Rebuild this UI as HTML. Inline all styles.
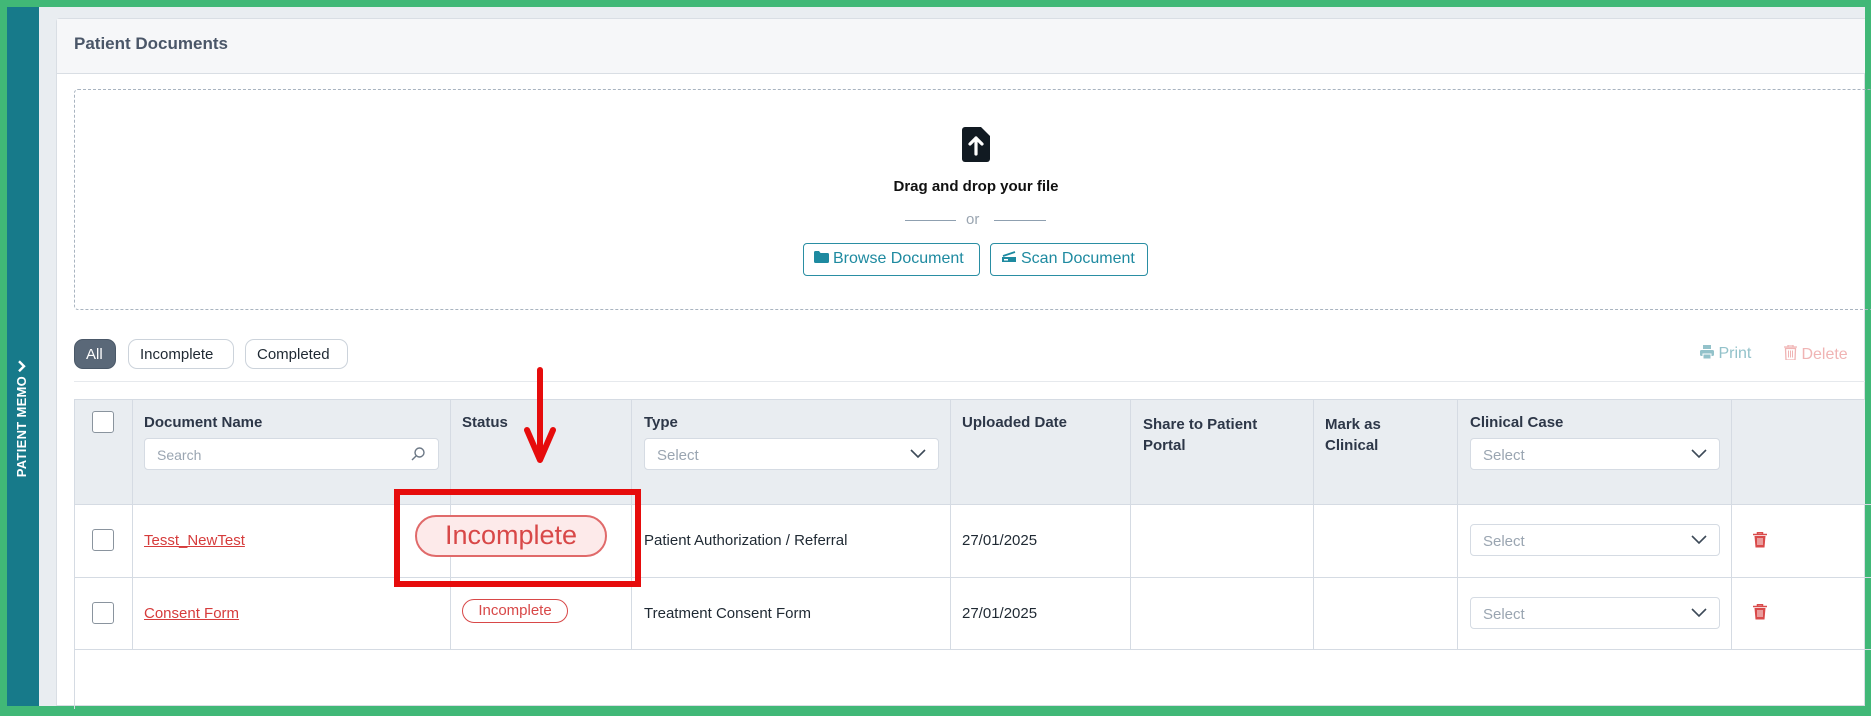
<!DOCTYPE html>
<html><head><meta charset="utf-8"><style>
*{box-sizing:border-box;margin:0;padding:0}
body{width:1871px;height:716px;overflow:hidden;background:#41b877;font-family:"Liberation Sans",sans-serif;position:relative}
.a{position:absolute}
.t{color:#1f2933;font-size:15px}
.h{color:#2d3748;font-size:15px;font-weight:bold}
.sel{position:absolute;background:#fff;border:1px solid #d5dbe3;border-radius:4px;height:32px;color:#9aa5b1;font-size:15px;padding:8px 12px}
.sel svg{position:absolute;right:12px;top:10px}
.cb{position:absolute;width:22px;height:22px;border:1.5px solid #8a949e;border-radius:3px;background:#fff;left:92px}
.vl{position:absolute;width:1px;background:#d5dbe3}
.hl{position:absolute;height:1px;background:#d5dbe3;left:74px;right:0}
.pill{position:absolute;height:30px;border:1px solid #ccd3db;border-radius:9px;font-size:15px;color:#1f2933;padding:6px 11px;background:#fff}
.btn{position:absolute;top:243px;height:33px;border:1.5px solid #2a8ea3;border-radius:4px;color:#1e8aa0;font-size:16px;padding:6px 10px 0 10px}
.trash{position:absolute;left:1753px}
</style></head><body>
<div class="a" style="left:7px;top:7px;width:1858px;height:699px;background:#e9edf1"></div>
<div class="a" style="left:7px;top:7px;width:32px;height:699px;background:#177a8a"></div>
<div class="a" style="left:14px;top:360px;width:20px;color:#fff;font-size:13px;font-weight:bold;writing-mode:vertical-rl;transform:rotate(180deg);letter-spacing:0.3px">PATIENT MEMO <svg width="10" height="12" viewBox="0 0 10 12" style="transform:rotate(180deg)"><path d="M2 1l5 5-5 5" stroke="#fff" stroke-width="2.4" fill="none"/></svg></div>
<!-- card -->
<div class="a" style="left:56px;top:18px;width:1809px;height:688px;background:#fff;border:1px solid #d9dee4;border-radius:4px 0 0 0"></div>
<div class="a" style="left:57px;top:19px;width:1808px;height:55px;background:#f6f7f9;border-bottom:1px solid #d9dee4"></div>
<div class="a" style="left:74px;top:34px;font-size:17px;font-weight:bold;color:#4a5668">Patient Documents</div>
<!-- drop zone -->
<div class="a" style="left:74px;top:89px;width:1800px;height:221px;border:1px dashed #a9b4c0;border-radius:4px"></div>
<svg class="a" style="left:962px;top:127px" width="28" height="35" viewBox="0 0 28 35"><path d="M3 0H19L28 9V32a3 3 0 0 1-3 3H3a3 3 0 0 1-3-3V3a3 3 0 0 1 3-3z" fill="#111a22"/><path d="M14 27V11M8 17L14 11L20 17" stroke="#fff" stroke-width="3.2" fill="none" stroke-linecap="round" stroke-linejoin="round"/></svg>
<div class="a" style="left:820px;top:178px;width:312px;text-align:center;font-size:15px;font-weight:bold;color:#111">Drag and drop your file</div>
<div class="a" style="left:905px;top:220px;width:51px;height:1px;background:#8fa0b0"></div>
<div class="a" style="left:994px;top:220px;width:52px;height:1px;background:#8fa0b0"></div>
<div class="a" style="left:966px;top:211px;font-size:15px;color:#9aa5b1">or</div>
<div class="btn" style="left:803px;width:177px"><svg width="15" height="12" viewBox="0 0 15 12" style="margin-right:4px"><path d="M0 1.5A1.5 1.5 0 0 1 1.5 0H5L6.5 2H13.5A1.5 1.5 0 0 1 15 3.5V10.5A1.5 1.5 0 0 1 13.5 12H1.5A1.5 1.5 0 0 1 0 10.5Z" fill="#1e8aa0"/></svg>Browse Document</div>
<div class="btn" style="left:990px;width:158px"><svg width="16" height="12" viewBox="0 0 16 12" style="margin-right:4px"><path d="M1 6h14v5H1z" fill="#1e8aa0"/><path d="M2 5L14 1" stroke="#1e8aa0" stroke-width="1.8"/><rect x="3" y="8" width="4" height="1.5" fill="#fff"/></svg>Scan Document</div>
<!-- filters -->
<div class="pill" style="left:74px;top:339px;width:42px;background:#5a6878;color:#fff;border-color:#4a5868;padding-left:11px">All</div>
<div class="pill" style="left:128px;top:339px;width:106px">Incomplete</div>
<div class="pill" style="left:245px;top:339px;width:103px">Completed</div>
<div class="a" style="left:1700px;top:345px;font-size:16px;color:#93c2ca"><svg width="14" height="14" viewBox="0 0 14 14" style="vertical-align:-1px"><rect x="3" y="0" width="8" height="4" fill="#93c2ca"/><rect x="0" y="5" width="14" height="6" rx="1.5" fill="#93c2ca"/><rect x="3" y="9" width="8" height="5" fill="#93c2ca" stroke="#fff" stroke-width="1"/></svg> Print</div>
<div class="a" style="left:1784px;top:345px;font-size:16px;color:#f0b4b4"><svg width="13" height="15" viewBox="0 0 13 15" style="vertical-align:-1px"><path d="M0 2h13M4 2V0h5v2M1.5 3.5h10L11 15H2z" stroke="#f0b4b4" stroke-width="1.3" fill="none"/><path d="M4.5 5.5v7M6.5 5.5v7M8.5 5.5v7" stroke="#f0b4b4" stroke-width="1"/></svg> Delete</div>
<div class="a" style="left:74px;top:381px;width:1791px;height:1px;background:#e6e9ed"></div>
<!-- table -->
<div class="a" style="left:74px;top:399px;width:1791px;height:105px;background:#e9edf1;border-top:1px solid #d5dbe3"></div>
<div class="vl" style="left:74px;top:399px;height:310px"></div>
<div class="vl" style="left:132px;top:399px;height:250px"></div>
<div class="vl" style="left:450px;top:399px;height:250px"></div>
<div class="vl" style="left:631px;top:399px;height:250px"></div>
<div class="vl" style="left:950px;top:399px;height:250px"></div>
<div class="vl" style="left:1130px;top:399px;height:250px"></div>
<div class="vl" style="left:1313px;top:399px;height:250px"></div>
<div class="vl" style="left:1457px;top:399px;height:250px"></div>
<div class="vl" style="left:1731px;top:399px;height:250px"></div>
<div class="hl" style="top:504px"></div>
<div class="hl" style="top:577px"></div>
<div class="hl" style="top:649px"></div>
<div class="cb" style="top:411px"></div>
<div class="cb" style="top:529px"></div>
<div class="cb" style="top:602px"></div>
<div class="a h" style="left:144px;top:414px">Document Name</div>
<div class="a h" style="left:462px;top:414px">Status</div>
<div class="a h" style="left:644px;top:414px">Type</div>
<div class="a h" style="left:962px;top:414px">Uploaded Date</div>
<div class="a h" style="left:1143px;top:414px;line-height:21px;width:150px">Share to Patient Portal</div>
<div class="a h" style="left:1325px;top:414px;line-height:21px;width:100px">Mark as Clinical</div>
<div class="a h" style="left:1470px;top:414px">Clinical Case</div>
<div class="sel" style="left:144px;top:438px;width:295px;font-size:14px"><span>Search</span><svg width="16" height="16" viewBox="0 0 16 16" style="top:7px"><circle cx="9.5" cy="6.5" r="4.5" stroke="#6b7785" stroke-width="1.4" fill="none"/><path d="M6.3 9.7L2 14" stroke="#6b7785" stroke-width="1.4"/></svg></div>
<div class="sel" style="left:644px;top:438px;width:295px">Select<svg width="16" height="10" viewBox="0 0 16 10"><path d="M1 1l7 7 7-7" stroke="#3d4a58" stroke-width="1.6" fill="none"/></svg></div>
<div class="sel" style="left:1470px;top:438px;width:250px">Select<svg width="16" height="10" viewBox="0 0 16 10"><path d="M1 1l7 7 7-7" stroke="#3d4a58" stroke-width="1.6" fill="none"/></svg></div>
<div class="sel" style="left:1470px;top:524px;width:250px">Select<svg width="16" height="10" viewBox="0 0 16 10"><path d="M1 1l7 7 7-7" stroke="#3d4a58" stroke-width="1.6" fill="none"/></svg></div>
<div class="sel" style="left:1470px;top:597px;width:250px">Select<svg width="16" height="10" viewBox="0 0 16 10"><path d="M1 1l7 7 7-7" stroke="#3d4a58" stroke-width="1.6" fill="none"/></svg></div>
<!-- row1 -->
<div class="a" style="left:144px;top:532px;font-size:15px;color:#d63c3c;text-decoration:underline">Tesst_NewTest</div>
<div class="a" style="left:415px;top:515px;width:192px;height:42px;border:2px solid #e06a6a;border-radius:21px;background:#fdeaea;color:#d84848;font-size:27px;text-align:center;line-height:37px">Incomplete</div>
<div class="a t" style="left:644px;top:532px">Patient Authorization / Referral</div>
<div class="a t" style="left:962px;top:532px">27/01/2025</div>
<!-- row2 -->
<div class="a" style="left:144px;top:605px;font-size:15px;color:#d63c3c;text-decoration:underline">Consent Form</div>
<div class="a" style="left:462px;top:599px;width:106px;height:24px;border:1px solid #d84848;border-radius:12px;color:#d84848;font-size:15px;text-align:center;line-height:21px">Incomplete</div>
<div class="a t" style="left:644px;top:605px">Treatment Consent Form</div>
<div class="a t" style="left:962px;top:605px">27/01/2025</div>
<svg class="trash" style="top:532px" width="14" height="16" viewBox="0 0 14 16"><path d="M0 2.5h14M4.5 2.5V0.7h5v1.8" stroke="#d94a4a" stroke-width="1.5" fill="none"/><path d="M1.5 4h11L11.5 15.5h-9z" fill="#d94a4a"/><path d="M5 6v7M7 6v7M9 6v7" stroke="#fff" stroke-width="0.9"/></svg>
<svg class="trash" style="top:604px" width="14" height="16" viewBox="0 0 14 16"><path d="M0 2.5h14M4.5 2.5V0.7h5v1.8" stroke="#d94a4a" stroke-width="1.5" fill="none"/><path d="M1.5 4h11L11.5 15.5h-9z" fill="#d94a4a"/><path d="M5 6v7M7 6v7M9 6v7" stroke="#fff" stroke-width="0.9"/></svg>
<!-- annotation -->
<div class="a" style="left:394px;top:489px;width:247px;height:98px;border:6px solid #e60c0c"></div>
<svg class="a" style="left:520px;top:364px" width="40" height="104" viewBox="0 0 40 104"><path d="M20 6V96M7 66L20 96L33 66" stroke="#e60c0c" stroke-width="6" fill="none" stroke-linecap="round" stroke-linejoin="round"/></svg>
</body></html>
